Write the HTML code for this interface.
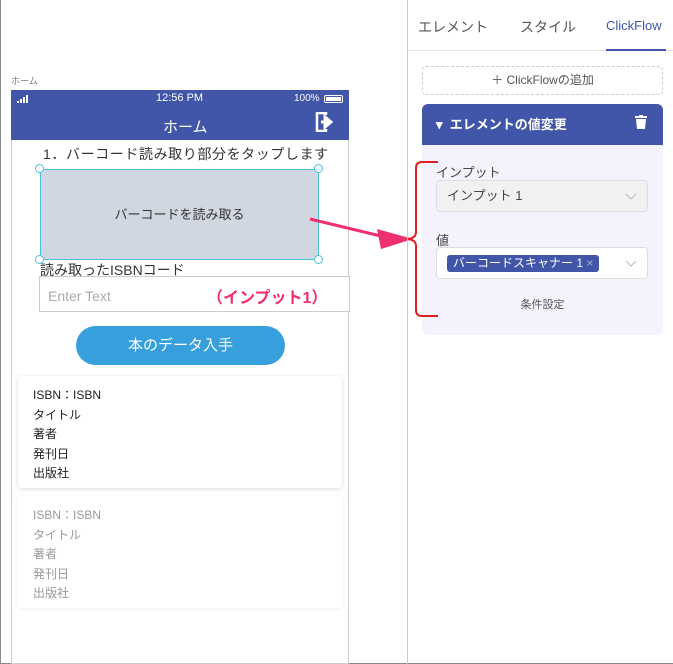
<!DOCTYPE html>
<html><head><meta charset="utf-8"><style>
*{margin:0;padding:0;box-sizing:border-box}
body{width:673px;height:664px;overflow:hidden;background:#fff;font-family:"Liberation Sans","Noto Sans CJK JP",sans-serif;position:relative}
.a{position:absolute}
.frame{left:0;top:0;width:673px;height:664px;border:1px solid #8a8a8a;border-top:none;border-right:none}
</style></head><body>
<div class="a frame"></div>
<div class="a" style="left:11px;top:74px;font-size:9px;color:#777">ホーム</div>
<div class="a" style="left:11px;top:90px;width:338px;height:574px;border:1px solid #ccc;background:#fff"></div>
<div class="a" style="left:11px;top:90px;width:338px;height:50px;background:#4156a8;color:#fff">
  <svg class="a" style="left:6px;top:5px" width="14" height="8"><rect x="0" y="6" width="2" height="2" fill="#fff"/><rect x="3" y="4" width="2" height="4" fill="#fff"/><rect x="6" y="2" width="2" height="6" fill="#fff"/><rect x="9" y="0" width="2" height="8" fill="#fff"/></svg>
  <div class="a" style="left:145px;top:2px;font-size:11px">12:56 PM</div>
  <div class="a" style="left:283px;top:3px;font-size:10px">100%</div>
  <div class="a" style="left:313px;top:5px;width:19px;height:8px;border:1px solid #fff;border-radius:2px;padding:1px"><div style="width:100%;height:100%;background:#fff"></div></div>
  <div class="a" style="left:152px;top:26px;font-size:15px">ホーム</div>
  <svg class="a" style="left:304px;top:22px" width="18" height="20" viewBox="0 0 18 20"><path d="M11 3V1H2v18h9v-2" fill="none" stroke="#fff" stroke-width="2.5"/><path d="M6 10h7M10 5l6 5-6 5z" stroke="#fff" stroke-width="3" fill="#fff"/></svg>
</div>
<div class="a" style="left:43px;top:144px;font-size:14px;color:#333;letter-spacing:0.6px">1．バーコード読み取り部分をタップします</div>
<div class="a" style="left:40px;top:169px;width:279px;height:91px;background:#d1d7e0;border:1px solid #4bc1d9;font-size:13px;color:#333;text-align:center;line-height:89px">バーコードを読み取る</div>
<div class="a" style="left:35px;top:164px;width:9px;height:9px;border:1px solid #4bc1d9;border-radius:50%;background:#fff"></div>
<div class="a" style="left:314px;top:164px;width:9px;height:9px;border:1px solid #4bc1d9;border-radius:50%;background:#fff"></div>
<div class="a" style="left:35px;top:255px;width:9px;height:9px;border:1px solid #4bc1d9;border-radius:50%;background:#fff"></div>
<div class="a" style="left:314px;top:255px;width:9px;height:9px;border:1px solid #4bc1d9;border-radius:50%;background:#fff"></div>
<div class="a" style="left:40px;top:260px;font-size:14px;color:#333">読み取ったISBNコード</div>
<div class="a" style="left:39px;top:276px;width:311px;height:36px;border:1px solid #ccc;background:#fff"></div>
<div class="a" style="left:48px;top:288px;font-size:14px;color:#aaa">Enter Text</div>
<div class="a" style="left:207px;top:284px;font-size:16px;font-weight:bold;color:#f0306e">（インプット1）</div>
<div class="a" style="left:76px;top:326px;width:209px;height:39px;border-radius:20px;background:#37a0dc;color:#fff;font-size:15px;text-align:center;line-height:39px">本のデータ入手</div>
<div class="a" style="left:18px;top:376px;width:324px;height:112px;background:#fff;border-radius:4px;box-shadow:0 1px 4px rgba(0,0,0,.15);font-size:12px;color:#222;padding:10px 0 0 15px;line-height:19.5px">ISBN：ISBN<br>タイトル<br>著者<br>発刊日<br>出版社</div>
<div class="a" style="left:18px;top:496px;width:324px;height:112px;background:#fff;border-radius:4px;box-shadow:0 1px 4px rgba(0,0,0,.08);font-size:12px;color:#999;padding:10px 0 0 15px;line-height:19.5px">ISBN：ISBN<br>タイトル<br>著者<br>発刊日<br>出版社</div>
<svg class="a" style="left:305px;top:212px" width="110" height="40"><path d="M5 7 L80 25" stroke="#f0306e" stroke-width="3"/><path d="M72 17 L108 27 L76 37 Z" fill="#f0306e"/></svg>
<div class="a" style="left:407px;top:0;width:1px;height:664px;background:#ccc"></div>
<div class="a" style="left:418px;top:17px;font-size:14px;color:#555">エレメント</div>
<div class="a" style="left:520px;top:17px;font-size:14px;color:#555">スタイル</div>
<div class="a" style="left:606px;top:18px;font-size:13px;color:#4156a8">ClickFlow</div>
<div class="a" style="left:408px;top:50px;width:265px;height:1px;background:#e4e4e4"></div>
<div class="a" style="left:606px;top:49px;width:60px;height:2px;background:#4156a8"></div>
<div class="a" style="left:422px;top:66px;width:241px;height:29px;border:1px dashed #ccc;border-radius:4px;text-align:center;font-size:12px;color:#555;line-height:27px">＋ ClickFlowの追加</div>
<div class="a" style="left:422px;top:104px;width:241px;height:231px;background:#f4f3fd;border-radius:6px;overflow:hidden">
  <div style="height:41px;background:#4156a8;color:#fff;font-size:13px;font-weight:bold;line-height:41px;padding-left:14px">▾&nbsp;&nbsp;エレメントの値変更</div>
  <svg class="a" style="left:213px;top:11px" width="12" height="14" viewBox="0 0 12 14"><rect x="0" y="1" width="12" height="2" fill="#fff"/><rect x="4" y="0" width="4" height="2" fill="#fff"/><path d="M1 4h10l-1 10H2z" fill="#fff"/></svg>
  <div class="a" style="left:14px;top:58px;font-size:13px;color:#444">インプット</div>
  <div class="a" style="left:14px;top:76px;width:212px;height:32px;background:#f1f1f1;border:1px solid #ddd;border-radius:4px;font-size:13px;color:#444;line-height:30px;padding-left:10px">インプット 1<svg class="a" style="right:10px;top:12px" width="12" height="7"><path d="M1 1l5 5 5-5" fill="none" stroke="#bbb"/></svg></div>
  <div class="a" style="left:14px;top:126px;font-size:13px;color:#444">値</div>
  <div class="a" style="left:14px;top:143px;width:212px;height:32px;background:#fff;border:1px solid #ddd;border-radius:4px"><div class="a" style="left:10px;top:7px;height:17px;padding:0 6px;background:#4156a8;color:#fff;border-radius:3px;font-size:12px;line-height:17px">バーコードスキャナー 1 <span style="color:#aac">×</span></div><svg class="a" style="right:10px;top:12px" width="12" height="7"><path d="M1 1l5 5 5-5" fill="none" stroke="#bbb"/></svg></div>
  <div class="a" style="left:0;top:192px;width:241px;text-align:center;font-size:11px;color:#555">条件設定</div>
</div>
<svg class="a" style="left:405px;top:160px" width="36" height="158"><path d="M33 2 H17 Q11 2 11 8 V72 Q11 78 3 79 Q11 80 11 86 V150 Q11 156 17 156 H33" fill="none" stroke="#e02020" stroke-width="2"/></svg>
</body></html>
